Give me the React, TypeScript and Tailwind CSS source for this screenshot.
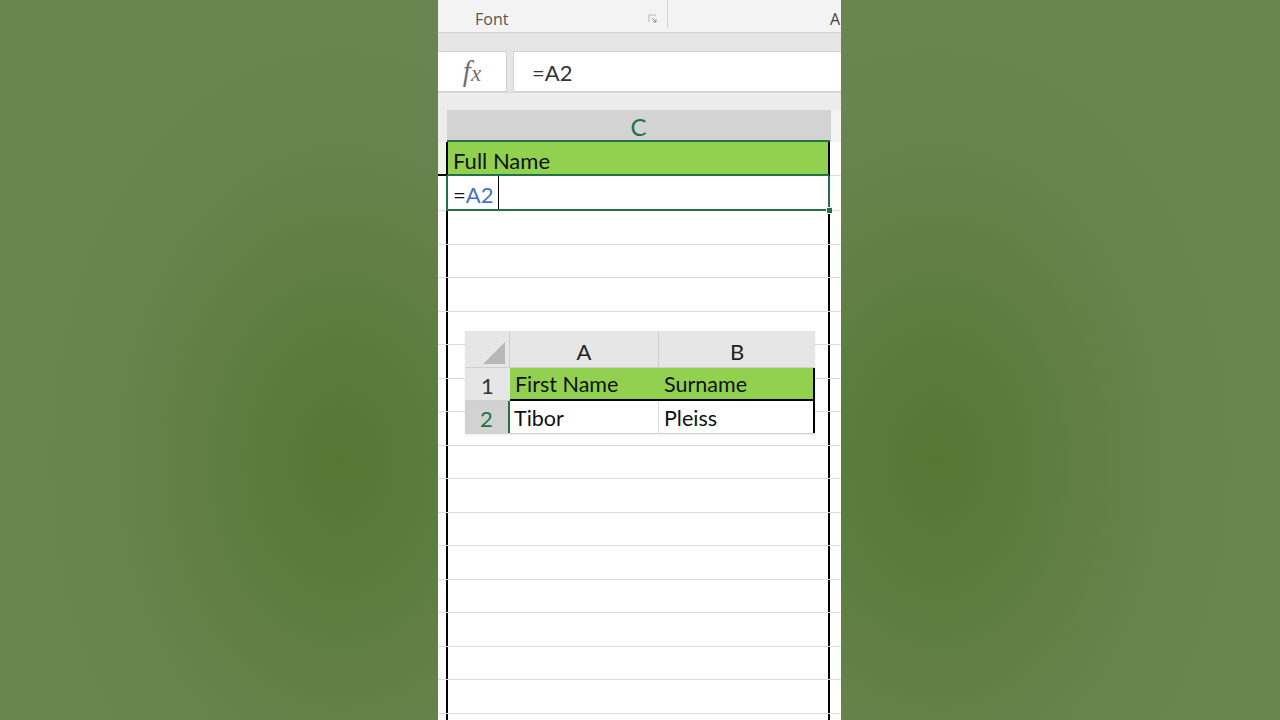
const gridRows = Array.from({ length: 16 });

function Launcher() {
  return (
    <svg width="10" height="10" viewBox="0 0 10 10" className="shrink-0">
      <path d="M1 1h7M1 1v7" stroke="#b5b5b5" strokeWidth="1" fill="none" />
      <path d="M4 4l4 4M8 5v3H5" stroke="#8f8f8f" strokeWidth="1" fill="none" />
    </svg>
  );
}

function SheetRow({ children }: { children?: React.ReactNode }) {
  return (
    <div className="flex h-[33.5px] shrink-0 border-b border-[#dcdcdc]">
      <div className="w-[8px] shrink-0" />
      <div className="w-[384px] shrink-0 border-x-2 border-black">{children}</div>
      <div className="flex-1" />
    </div>
  );
}

function MiniSheet() {
  return (
    <div className="absolute left-[27px] top-[331px] grid w-[350px] grid-cols-[45px_149px_156px] grid-rows-[37px_33px_32px] border-b border-[#d0d0d0] bg-white font-['Lato',sans-serif] text-[21.5px] text-[#111] shadow-[0_1px_2px_rgba(0,0,0,0.08)]">
      {/* header row */}
      <div className="relative border-b border-r border-[#cfcfcf] bg-[#e6e6e6]">
        <svg width="22" height="22" viewBox="0 0 22 22" className="absolute bottom-[3px] right-[4px]">
          <path d="M22 0V22H0Z" fill="#b8b8b8" />
        </svg>
      </div>
      <div className="flex items-center justify-center border-b border-r border-[#cfcfcf] bg-[#e6e6e6] pt-[5px] text-[22px] text-[#222]">A</div>
      <div className="flex items-center justify-center border-b border-[#cfcfcf] bg-[#e6e6e6] pt-[5px] text-[22px] text-[#222]">B</div>

      {/* row 1 */}
      <div className="flex items-center justify-center border-b border-[#cfcfcf] bg-[#e6e6e6] pt-[2px] text-[22px] text-[#333]">1</div>
      <div className="flex items-center border-b-2 border-black bg-[#92d050] pl-[5px] pt-[2px]">First Name</div>
      <div className="flex items-center border-b-2 border-r-2 border-black bg-[#92d050] pl-[5px] pt-[2px]">Surname</div>

      {/* row 2 */}
      <div className="flex items-center justify-center border-r-2 border-[#217346] bg-[#d2d2d2] pt-[2px] text-[22px] text-[#217346]">2</div>
      <div className="flex items-center border-r border-[#dedede] pl-[4px] pt-[2px]">Tibor</div>
      <div className="flex items-center border-r-2 border-black pl-[5px] pt-[2px]">Pleiss</div>
    </div>
  );
}

export default function App() {
  return (
    <div className="flex h-[720px] w-[1280px] overflow-hidden">
      <div className="h-full w-[438px] shrink-0 bg-[radial-gradient(ellipse_70%_60%_at_78%_64%,#567636_0%,#5d7d3f_35%,#67834c_70%,#6b8551_100%)]" />

      <div className="relative flex h-full w-[403px] shrink-0 flex-col overflow-hidden bg-white font-['Lato',sans-serif]">
        {/* ribbon */}
        <div className="grid h-[33px] shrink-0 grid-cols-[230px_1fr] border-b border-[#d6d6d6] bg-[#f3f3f3]">
          <div className="flex h-[28px] items-center justify-between border-r border-[#d2d2d2] pl-[37px] pr-[9px] pt-[10px]">
            <span className="font-['Open_Sans',sans-serif] text-[16px] text-[#555]">Font</span>
            <Launcher />
          </div>
          <div className="flex h-[28px] items-center justify-end pr-[1px] pt-[10px]">
            <span className="font-['Open_Sans',sans-serif] text-[16px] text-[#444]">A</span>
          </div>
        </div>
        <div className="h-[18px] shrink-0 bg-[#e6e6e6]" />

        {/* formula bar */}
        <div className="flex h-[41px] shrink-0 gap-[6px] bg-[#e6e6e6]">
          <div className="flex w-[69px] items-center justify-center border-y border-r border-[#d0d0d0] bg-white">
            <span className="font-['Liberation_Serif',serif] text-[29px] italic leading-none text-[#6f6f6f]">
              f<span className="text-[23px]">x</span>
            </span>
          </div>
          <div className="flex flex-1 items-center border-y border-l border-[#d0d0d0] bg-white pl-[18px] pt-[2px] text-[22px] text-[#333]">
            =A2
          </div>
        </div>
        <div className="h-[18px] shrink-0 border-t border-[#d8d8d8] bg-[#ececec]" />

        {/* column header */}
        <div className="flex h-[32px] shrink-0">
          <div className="w-[9px] shrink-0 bg-[#ececec]" />
          <div className="flex w-[383px] shrink-0 items-center justify-center border-b-2 border-[#217346] bg-[#d4d4d4] pt-[3px] text-[24px] text-[#217346]">
            C
          </div>
          <div className="flex-1 border-l border-[#d0d0d0] bg-[#f4f4f4]" />
        </div>

        {/* row 1 */}
        <div className="flex h-[34px] shrink-0">
          <div className="w-[8px] shrink-0 border-b-2 border-black bg-[#eef6e6]" />
          <div className="flex w-[384px] shrink-0 items-center border-x-2 border-b-2 border-x-black border-b-[#217346] bg-[#92d050] pl-[5px] pt-[4px] text-[22px] text-[#111]">
            Full Name
          </div>
          <div className="flex-1 border-b border-[#dcdcdc]" />
        </div>

        {/* row 2 - active cell */}
        <div className="flex h-[35px] shrink-0">
          <div className="w-[8px] shrink-0 border-b border-[#dcdcdc]" />
          <div className="relative flex w-[384px] shrink-0 items-stretch border-2 border-t-0 border-[#217346] pl-[5px] text-[22px]">
            <span className="flex items-center pr-[5px] pt-[4px] text-[#111]">
              =<span className="text-[#4472c4]">A2</span>
            </span>
            <span className="w-px bg-black" />
            <span className="absolute -bottom-[5px] -right-[5px] h-[7px] w-[7px] border border-white bg-[#217346]" />
          </div>
          <div className="flex-1 border-b border-[#dcdcdc]" />
        </div>

        {gridRows.map((_, i) => (
          <SheetRow key={i} />
        ))}

        <MiniSheet />
      </div>

      <div className="h-full flex-1 bg-[radial-gradient(ellipse_70%_60%_at_22%_64%,#567636_0%,#5d7d3f_35%,#67834c_70%,#6b8551_100%)]" />
    </div>
  );
}
